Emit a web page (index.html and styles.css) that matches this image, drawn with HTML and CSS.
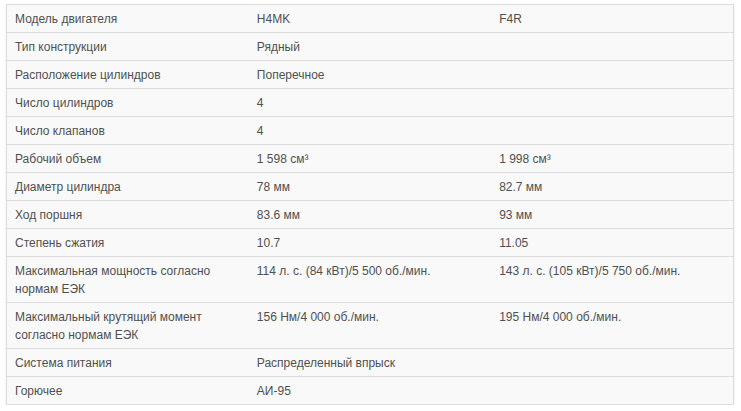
FILE: index.html
```html
<!DOCTYPE html>
<html lang="ru">
<head>
<meta charset="utf-8">
<link rel="stylesheet" href="styles.css">
</head>
<body>
<div class="wrap">
<table class="specs">
<tbody>
<tr><td>Модель двигателя</td><td>H4MK</td><td>F4R</td></tr>
<tr><td>Тип конструкции</td><td>Рядный</td><td></td></tr>
<tr><td>Расположение цилиндров</td><td>Поперечное</td><td></td></tr>
<tr><td>Число цилиндров</td><td>4</td><td></td></tr>
<tr><td>Число клапанов</td><td>4</td><td></td></tr>
<tr><td>Рабочий объем</td><td>1 598 см³</td><td>1 998 см³</td></tr>
<tr><td>Диаметр цилиндра</td><td>78 мм</td><td>82.7 мм</td></tr>
<tr><td>Ход поршня</td><td>83.6 мм</td><td>93 мм</td></tr>
<tr><td>Степень сжатия</td><td>10.7</td><td>11.05</td></tr>
<tr><td>Максимальная мощность согласно нормам ЕЭК</td><td>114 л. с. (84 кВт)/5 500 об./мин.</td><td>143 л. с. (105 кВт)/5 750 об./мин.</td></tr>
<tr><td>Максимальный крутящий момент согласно нормам ЕЭК</td><td>156 Нм/4 000 об./мин.</td><td>195 Нм/4 000 об./мин.</td></tr>
<tr><td>Система питания</td><td>Распределенный впрыск</td><td></td></tr>
<tr><td>Горючее</td><td>АИ-95</td><td></td></tr>
</tbody>
</table>
</div>
</body>
</html>
```
FILE: styles.css
```css
html, body {
  margin: 0;
  padding: 0;
  background: #ffffff;
}
.wrap {
  padding: 4px 7px 0 6px;
}
.specs {
  width: 728px;
  border-collapse: collapse;
  table-layout: fixed;
  font-family: "Liberation Sans", Arial, sans-serif;
  font-size: 12px;
  line-height: 18px;
  color: #505050;
  background: #f9f9f9;
  border: 1px solid #dddddd;
  box-shadow: 0 1px 2px rgba(0,0,0,0.12);
}
.specs td {
  border-top: 1px solid #dddddd;
  border-bottom: 1px solid #dddddd;
  padding: 5px 8px 4px 8px;
  vertical-align: top;
  text-align: left;
}
```
